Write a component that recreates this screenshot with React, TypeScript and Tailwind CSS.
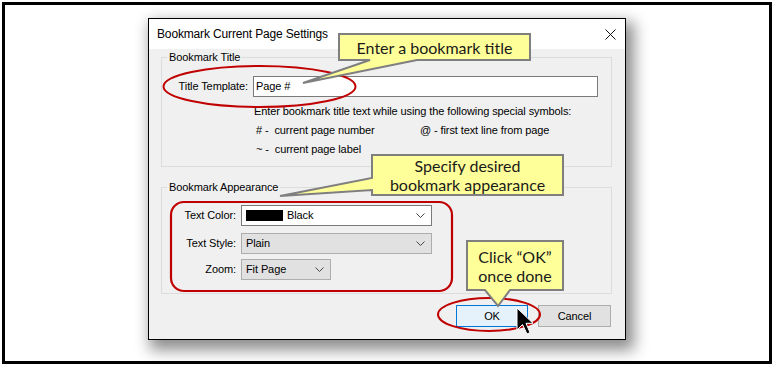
import { ReactNode } from "react"

const ui = "font-['Liberation_Sans',Arial,sans-serif]"

function Chevron() {
  return (
    <svg width="9" height="5" viewBox="0 0 9 5" className="shrink-0">
      <polyline points="0.5,0.5 4.5,4.5 8.5,0.5" fill="none" stroke="#444" strokeWidth="1" />
    </svg>
  )
}

function Select({ width, white, children }: { width: string; white?: boolean; children: ReactNode }) {
  return (
    <div
      className={`flex h-[21px] items-center justify-between border pl-[4px] pr-[6px] ${width} ${
        white ? "border-[#7a7a7a] bg-white" : "border-[#adadad] bg-[#e1e1e1]"
      }`}
    >
      <div className="flex items-center gap-[4px]">{children}</div>
      <Chevron />
    </div>
  )
}

function Row({ label, children, className }: { label: string; children: ReactNode; className: string }) {
  return (
    <div className={`flex items-center gap-[5px] ${className}`}>
      <span className="w-[74px] text-right">{label}</span>
      {children}
    </div>
  )
}

function Annotations() {
  return (
    <>
      <svg className="pointer-events-none absolute inset-0" width="774" height="366" viewBox="0 0 774 366">
        <ellipse cx="259.5" cy="86.5" rx="96" ry="20.5" fill="none" stroke="#c00000" strokeWidth="2" />
        <rect x="171" y="202" width="281" height="89" rx="13" fill="none" stroke="#c00000" strokeWidth="2.2" />
        <ellipse cx="489" cy="314.5" rx="51" ry="16.5" fill="none" stroke="#c00000" strokeWidth="2" />
        <path d="M339,34 H530 V60 H417 L303,83 L370,60 H339 Z" fill="#ffff99" stroke="#7f7f7f" strokeWidth="2" />
        <path d="M372,155 H563 V195 H372 V190 L280,196 L372,178 Z" fill="#ffff99" stroke="#7f7f7f" strokeWidth="2" />
        <path d="M467,241 H563 V290 H510 L498,306 L485,290 H467 Z" fill="#ffff99" stroke="#7f7f7f" strokeWidth="2" />
        <path
          d="M517,308 L517,330 L522.5,324.5 L527,334 L530,332.6 L526,323.3 L533,323.3 Z"
          fill="#000"
          stroke="#fff"
          strokeWidth="1"
          strokeLinejoin="round"
        />
      </svg>
      <div className="pointer-events-none absolute left-[339px] top-[34px] flex h-[26px] w-[191px] items-center justify-center font-['Lato',sans-serif] text-[16px] leading-[19px] text-[#1a1a1a]">
        Enter a bookmark title
      </div>
      <div className="pointer-events-none absolute left-[372px] top-[155px] flex h-[40px] w-[191px] flex-col items-center justify-center font-['Lato',sans-serif] text-[16px] leading-[19px] text-[#1a1a1a]">
        <span>Specify desired</span>
        <span>bookmark appearance</span>
      </div>
      <div className="pointer-events-none absolute left-[467px] top-[241px] flex h-[49px] w-[96px] flex-col items-center justify-center font-['Lato',sans-serif] text-[16px] leading-[19px] text-[#1a1a1a]">
        <span>Click “OK”</span>
        <span>once done</span>
      </div>
    </>
  )
}

export default function App() {
  return (
    <div className="relative h-[366px] w-[774px] bg-white p-[2px]">
      <div className="h-full border-[3px] border-black bg-white pt-[13px]">
        <div
          className={`mx-auto flex h-[322px] w-[478px] flex-col border border-black bg-[#f0f0f0] text-[11px] tracking-[-0.1px] text-black shadow-[5px_7px_14px_3px_rgba(0,0,0,0.45)] ${ui}`}
        >
          <div className="flex h-[30px] shrink-0 items-center justify-between bg-white pl-[8px] pr-[9px]">
            <span className="text-[12px] tracking-[-0.15px]">Bookmark Current Page Settings</span>
            <svg width="11" height="11" viewBox="0 0 11 11">
              <path d="M0.5,0.5 L10.5,10.5 M10.5,0.5 L0.5,10.5" stroke="#111" strokeWidth="1" />
            </svg>
          </div>

          <fieldset className="ml-[12px] h-[118px] w-[451px] border border-[#dcdcdc]">
            <legend className="ml-[5px] px-[2px] leading-[16px]">Bookmark Title</legend>
            <div className="mt-[11px] flex items-center gap-[5px]">
              <span className="w-[86px] text-right">Title Template:</span>
              <div className="flex h-[21px] w-[345px] items-center border border-[#7a7a7a] bg-white pl-[2px]">Page #</div>
            </div>
            <div className="ml-[92px] mt-[5px] flex flex-col">
              <span className="leading-[19px]">Enter bookmark title text while using the following special symbols:</span>
              <div className="ml-[2px] flex leading-[19px]">
                <span className="w-[164px] whitespace-pre">{"# -  current page number"}</span>
                <span>@ - first text line from page</span>
              </div>
              <span className="ml-[2px] whitespace-pre leading-[19px]">{"~ -  current page label"}</span>
            </div>
          </fieldset>

          <fieldset className="ml-[12px] mt-[12px] h-[115px] w-[451px] border border-[#dcdcdc]">
            <legend className="ml-[5px] px-[2px] leading-[16px]">Bookmark Appearance</legend>
            <Row label="Text Color:" className="mt-[10px]">
              <Select width="w-[191px]" white>
                <span className="h-[11px] w-[37px] bg-black" />
                <span>Black</span>
              </Select>
            </Row>
            <Row label="Text Style:" className="mt-[7px]">
              <Select width="w-[191px]">
                <span>Plain</span>
              </Select>
            </Row>
            <Row label="Zoom:" className="mt-[5px]">
              <Select width="w-[90px]">
                <span>Fit Page</span>
              </Select>
            </Row>
          </fieldset>

          <div className="mt-[11px] flex justify-end gap-[10px] pr-[14px]">
            <button className="h-[22px] w-[72px] border border-[#0078d7] bg-[#e5f1fb]">OK</button>
            <button className="h-[22px] w-[73px] border border-[#adadad] bg-[#e1e1e1]">Cancel</button>
          </div>
        </div>
      </div>
      <Annotations />
    </div>
  )
}
